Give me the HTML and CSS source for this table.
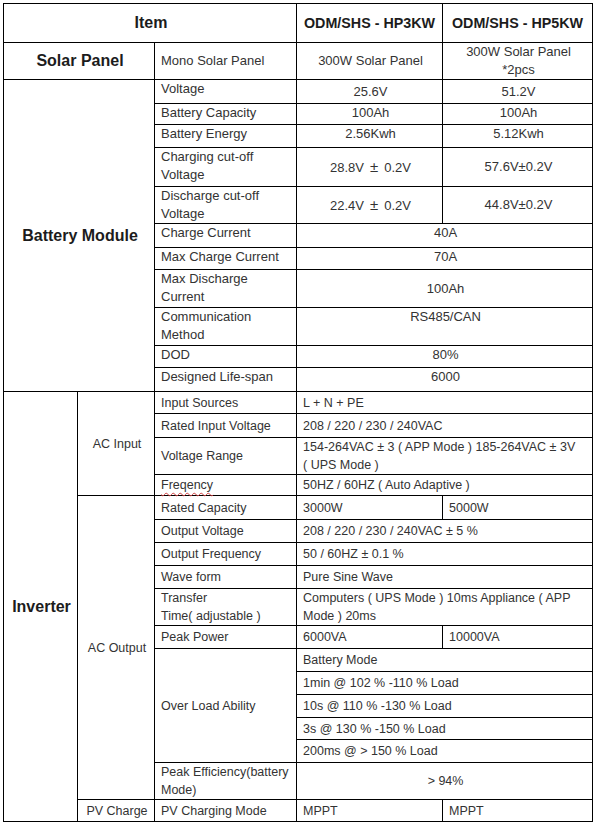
FILE: index.html
```html
<!DOCTYPE html>
<html>
<head>
<meta charset="utf-8">
<link rel="stylesheet" href="styles.css">
</head>
<body>
<table class="spec">
  <colgroup>
    <col class="c-a"><col class="c-b"><col class="c-c"><col class="c-d"><col class="c-e">
  </colgroup>
  <tr class="h39">
    <th colspan="3" class="item">Item</th>
    <th class="model">ODM/SHS - HP3KW</th>
    <th class="model">ODM/SHS - HP5KW</th>
  </tr>
  <tr class="h37">
    <td colspan="2" class="group mid ctr">Solar Panel</td>
    <td class="mid">Mono Solar Panel</td>
    <td class="mid ctr">300W Solar Panel</td>
    <td class="mid ctr">300W Solar Panel<br>*2pcs</td>
  </tr>
  <tr class="h24">
    <td colspan="2" rowspan="11" class="group mid ctr">Battery Module</td>
    <td>Voltage</td>
    <td class="ctr mid">25.6V</td>
    <td class="ctr mid">51.2V</td>
  </tr>
  <tr class="h21">
    <td>Battery Capacity</td>
    <td class="ctr">100Ah</td>
    <td class="ctr">100Ah</td>
  </tr>
  <tr class="h23">
    <td>Battery Energy</td>
    <td class="ctr">2.56Kwh</td>
    <td class="ctr">5.12Kwh</td>
  </tr>
  <tr class="h39">
    <td>Charging cut-off Voltage</td>
    <td class="ctr mid">28.8V <span class="pm">±</span> 0.2V</td>
    <td class="ctr mid">57.6V±0.2V</td>
  </tr>
  <tr class="h37">
    <td>Discharge cut-off Voltage</td>
    <td class="ctr mid">22.4V <span class="pm">±</span> 0.2V</td>
    <td class="ctr mid">44.8V±0.2V</td>
  </tr>
  <tr class="h24">
    <td>Charge Current</td>
    <td colspan="2" class="ctr">40A</td>
  </tr>
  <tr class="h22">
    <td>Max Charge Current</td>
    <td colspan="2" class="ctr">70A</td>
  </tr>
  <tr class="h38">
    <td>Max Discharge Current</td>
    <td colspan="2" class="ctr mid">100Ah</td>
  </tr>
  <tr class="h38">
    <td>Communication Method</td>
    <td colspan="2" class="ctr">RS485/CAN</td>
  </tr>
  <tr class="h22">
    <td>DOD</td>
    <td colspan="2" class="ctr">80%</td>
  </tr>
  <tr class="h24">
    <td>Designed Life-span</td>
    <td colspan="2" class="ctr">6000</td>
  </tr>

  <tr class="h22 inv">
    <td rowspan="17" class="group mid ctr">Inverter</td>
    <td rowspan="4" class="mid ctr">AC Input</td>
    <td class="mid">Input Sources</td>
    <td colspan="2" class="mid">L + N + PE</td>
  </tr>
  <tr class="h24 inv">
    <td class="mid">Rated Input Voltage</td>
    <td colspan="2" class="mid">208 / 220 / 230 / 240VAC</td>
  </tr>
  <tr class="h37 inv">
    <td class="mid">Voltage Range</td>
    <td colspan="2" class="mid">154-264VAC ± 3 ( APP Mode ) 185-264VAC ± 3V (&nbsp;UPS Mode )</td>
  </tr>
  <tr class="h21 inv">
    <td class="mid"><span class="typo">Freqency</span></td>
    <td colspan="2" class="mid">50HZ / 60HZ ( Auto Adaptive )</td>
  </tr>
  <tr class="h24 inv">
    <td rowspan="12" class="mid ctr">AC Output</td>
    <td class="mid">Rated Capacity</td>
    <td class="mid">3000W</td>
    <td class="mid">5000W</td>
  </tr>
  <tr class="h23 inv">
    <td class="mid">Output Voltage</td>
    <td colspan="2" class="mid">208 / 220 / 230 / 240VAC ± 5 %</td>
  </tr>
  <tr class="h23 inv">
    <td class="mid">Output Frequency</td>
    <td colspan="2" class="mid">50 / 60HZ ± 0.1 %</td>
  </tr>
  <tr class="h23 inv">
    <td class="mid">Wave form</td>
    <td colspan="2" class="mid">Pure Sine Wave</td>
  </tr>
  <tr class="h37 inv">
    <td class="mid">Transfer Time(&nbsp;adjustable )</td>
    <td colspan="2" class="mid">Computers ( UPS Mode ) 10ms Appliance ( APP Mode ) 20ms</td>
  </tr>
  <tr class="h23 inv">
    <td class="mid">Peak Power</td>
    <td class="mid">6000VA</td>
    <td class="mid">10000VA</td>
  </tr>
  <tr class="h23 inv">
    <td rowspan="5" class="mid">Over Load Ability</td>
    <td colspan="2" class="mid">Battery Mode</td>
  </tr>
  <tr class="h23 inv">
    <td colspan="2" class="mid">1min @ 102 % -110 % Load</td>
  </tr>
  <tr class="h23 inv">
    <td colspan="2" class="mid">10s @ 110 % -130 % Load</td>
  </tr>
  <tr class="h22 inv">
    <td colspan="2" class="mid">3s @ 130 % -150 % Load</td>
  </tr>
  <tr class="h23 inv">
    <td colspan="2" class="mid">200ms @ &gt; 150 % Load</td>
  </tr>
  <tr class="h37 inv">
    <td class="mid">Peak Efficiency(battery Mode)</td>
    <td colspan="2" class="mid ctr">&gt; 94%</td>
  </tr>
  <tr class="h22 inv">
    <td class="mid ctr">PV Charge</td>
    <td class="mid">PV Charging Mode</td>
    <td class="mid">MPPT</td>
    <td class="mid">MPPT</td>
  </tr>
</table>
</body>
</html>
```

FILE: styles.css
```css
html, body {
  margin: 0;
  background: #ffffff;
}

body {
  padding: 3px;
  font-family: "Liberation Sans", Arial, sans-serif;
  color: #333333;
}

.spec {
  border-collapse: collapse;
  table-layout: fixed;
  width: 589px;
}

.c-a { width: 74px; }
.c-b { width: 77px; }
.c-c { width: 142px; }
.c-d { width: 146px; }
.c-e { width: 150px; }

.spec th,
.spec td {
  border: 1px solid #000000;
  padding: 0 4px 0 6px;
  font-size: 13px;
  line-height: 18px;
  font-weight: normal;
  text-align: left;
  vertical-align: top;
}

.spec td.ctr,
.spec th.ctr { text-align: center; }
.spec td.mid { vertical-align: middle; }

.spec th.item {
  font-size: 16px;
  font-weight: bold;
  color: #1c1c1c;
  text-align: center;
  vertical-align: middle;
}

.spec th.model {
  font-size: 14.3px;
  font-weight: bold;
  color: #1c1c1c;
  text-align: center;
  vertical-align: middle;
  padding: 0;
}

.spec td.group {
  font-size: 16px;
  font-weight: bold;
  color: #1c1c1c;
}

.spec tr.inv > td { font-size: 12.5px; }
.spec tr.inv > td.group { font-size: 16px; }

.pm {
  display: inline-block;
  width: 13px;
  font-size: 15px;
  line-height: 18px;
  text-align: center;
}

.typo {
  text-decoration: underline wavy #d04040;
  text-decoration-thickness: 1px;
  text-underline-offset: 3px;
}

.h21 > td { height: 20px; }
.h22 > td { height: 21px; }
.h23 > td { height: 22px; }
.h24 > td { height: 23px; }
.h37 > td { height: 36px; }
.h38 > td { height: 37px; }
.h39 > td, .h39 > th { height: 38px; }
```
